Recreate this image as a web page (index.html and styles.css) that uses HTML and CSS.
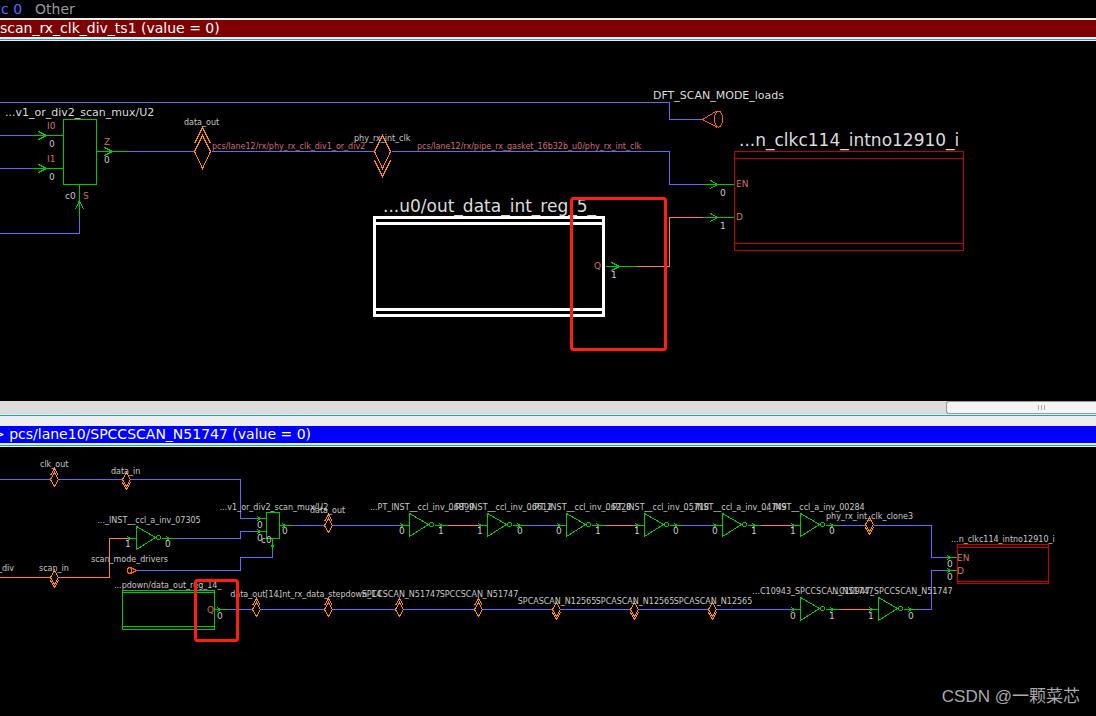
FILE: index.html
```html
<!DOCTYPE html>
<html lang="en">
<head>
	<meta charset="UTF-8">
	<title>Schematic viewer</title>
	<link rel="stylesheet" href="styles.css">
</head>
<body>
	<div class="viewer">
		<div class="legend">
			<span class="const">c 0</span>
			<span class="other">Other</span>
		</div>
		<div class="pane-title red">scan_rx_clk_div_ts1 (value = 0)</div>
		<svg class="canvas top">
			<g class="shapes" transform="translate(.5 .5)">
				<!-- nets -->
				<path class="net" d="M-1 61H669V78H702M-1 94H31M-1 127H31M-1 192H79V176M128 110H194M211 110H374M391 110H669V143H702"/>
				<path class="net one" d="M636 225H669V176H702"/>
				<!-- mux -->
				<path class="cell" d="M63 78H96V143H63ZM31 94H63M38 90L46 94L38 98M31 127H63M38 123L46 127L38 131M96 110H128M104 106L112 110L104 114M79 143V176M75 168L79 159L83 168"/>
				<!-- pins -->
				<path class="cell" d="M605 225H636M611 221L619 225L611 229M702 143H734M710 139L717 143L710 147M702 176H734M710 172L717 176L710 180"/>
				<path class="port" d="M202 94L210 110L202 127L194 110ZM194 102L202 86L210 102"/>
				<path class="port" d="M382 94L390 110L382 127L374 110ZM374 119L382 135L390 119"/>
				<path class="load" d="M717 69L702 78L717 86"/>
				<ellipse class="load" cx="718" cy="77.5" rx="4" ry="8"/>
				<path class="latch" d="M734 110H963V209H734ZM734 117H963M734 202H963"/>
				<path class="selected" d="M374 176H603V274H374ZM374 182H603M374 268H603"/>
			</g>
			<g class="labels">
				<text class="mid" x="5" y="75">...v1_or_div2_scan_mux/U2</text>
				<text x="184" y="84">data_out</text>
				<text class="path" x="212" y="108">pcs/lane12/rx/phy_rx_clk_div1_or_div2</text>
				<text x="354" y="100">phy_rx_int_clk</text>
				<text class="path" x="417" y="108">pcs/lane12/rx/pipe_rx_gasket_16b32b_u0/phy_rx_int_clk</text>
				<text class="mid" x="653" y="58">DFT_SCAN_MODE_loads</text>
				<text class="big" x="739" y="105">...n_clkc114_intno12910_i</text>
				<text class="big" x="383" y="171">...u0/out_data_int_reg_5_</text>
			</g>
			<g class="labels values">
				<text class="pin" x="47" y="88">I0</text>
				<text x="49" y="106">0</text>
				<text class="pin" x="47" y="121">I1</text>
				<text x="49" y="139">0</text>
				<text class="pin" x="104" y="104">Z</text>
				<text x="104" y="122">0</text>
				<text x="65" y="158">c0</text>
				<text class="pin" x="83" y="158">S</text>
				<text class="pin" x="736" y="146">EN</text>
				<text x="720" y="155">0</text>
				<text class="pin" x="736" y="179">D</text>
				<text x="720" y="188">1</text>
				<text class="pin" x="594" y="228">Q</text>
				<text x="611" y="237">1</text>
			</g>
			<rect class="mark" x="571.5" y="157.5" width="94" height="151" rx="2"/>
		</svg>
		<div class="scrollbar"><div class="thumb"><i></i><i></i><i></i></div></div>
		<div class="splitter"></div>
		<div class="pane-title blue"><span>&gt; pcs/lane10/SPCCSCAN_N51747 (value = 0)</span></div>
		<svg class="canvas bottom">
			<defs>
				<path id="up" d="M0 -6L4 1L0 8L-4 1ZM-4 -3L0 -10L4 -3"/>
				<path id="down" d="M0 -7L4 0L0 7L-4 0ZM-4 3L0 10L4 3"/>
				<g id="inv">
					<path d="M0 -12V11L19 -1ZM-9 0H0M-9 -2L-6 0L-9 2M25 0H38M30 -2L33 0L30 2"/>
					<circle cx="22" cy="-1" r="2"/>
				</g>
			</defs>
			<g class="shapes" transform="translate(.5 .5)">
				<path class="net" d="M-1 32H50M58 32H122M130 32H240V71H256M174 91H240V84H256M136 123H240V110H272V103M292 78H324M332 78H400M525 78H557M682 78H713M838 78H865M873 78H931V110H945M227 162H252M260 162H324M332 162H395M403 162H474M482 162H552M560 162H630M638 162H708M716 162H791M916 162H931V123H945"/>
				<path class="net one" d="M-1 130H50M58 130H109V91H127M447 78H478M604 78H635M760 78H791M838 162H869"/>
				<path class="cell" d="M266 65H279V91H266ZM256 71H266M257 69L260 71L257 73M256 84H266M257 82L260 84L257 86M279 78H292M282 76L285 78L282 80M272 91V103M270 100L272 97L274 100"/>
				<path class="cell" d="M122 143H214V182H122ZM122 145H214M122 179H214M214 162H227M217 160L220 162L217 164"/>
				<path class="cell" d="M945 110H957M947 108L950 110L947 112M945 123H957M947 121L950 123L947 125"/>
				<path class="latch" d="M957 97H1048V136H957ZM957 100H1048M957 134H1048"/>
				<g class="cell">
					<use href="#inv" x="136" y="91"/>
					<use href="#inv" x="409" y="78"/>
					<use href="#inv" x="487" y="78"/>
					<use href="#inv" x="566" y="78"/>
					<use href="#inv" x="644" y="78"/>
					<use href="#inv" x="722" y="78"/>
					<use href="#inv" x="800" y="78"/>
					<use href="#inv" x="800" y="162"/>
					<use href="#inv" x="878" y="162"/>
				</g>
				<g class="port">
					<use href="#up" x="54" y="31"/>
					<use href="#down" x="126" y="32"/>
					<use href="#down" x="54" y="130"/>
					<use href="#up" x="328" y="77"/>
					<use href="#down" x="869" y="77"/>
					<use href="#up" x="256" y="161"/>
					<use href="#up" x="328" y="161"/>
					<use href="#up" x="399" y="161"/>
					<use href="#up" x="478" y="161"/>
					<use href="#down" x="556" y="162"/>
					<use href="#down" x="634" y="162"/>
					<use href="#down" x="712" y="162"/>
				</g>
				<path class="load" d="M130 120L136 123L130 126"/>
				<ellipse class="load" cx="129" cy="123" rx="2" ry="3"/>
			</g>
			<g class="labels">
				<text x="40" y="20">clk_out</text>
				<text x="111" y="27">data_in</text>
				<text x="-2" y="124">_div</text>
				<text x="39" y="124">scan_in</text>
				<text x="91" y="115">scan_mode_drivers</text>
				<text x="114" y="141">...pdown/data_out_reg_14_</text>
				<text x="310" y="66">data_out</text>
				<text x="826" y="72">phy_rx_int_clk_clone3</text>
				<text x="951" y="95">...n_clkc114_intno12910_i</text>
			</g>
			<g class="labels centered">
				<text x="149" y="76">..._INST__ccl_a_inv_07305</text>
				<text x="274" y="63">...v1_or_div2_scan_mux/U2</text>
				<text x="422" y="63">...PT_INST__ccl_inv_06899</text>
				<text x="500" y="63">...PT_INST__ccl_inv_06612</text>
				<text x="579" y="63">...PT_INST__ccl_inv_06228</text>
				<text x="657" y="63">...PT_INST__ccl_inv_05718</text>
				<text x="735" y="63">..._INST__ccl_a_inv_04749</text>
				<text x="813" y="63">..._INST__ccl_a_inv_00284</text>
				<text x="256" y="150">data_out[14]</text>
				<text x="328" y="150">...nt_rx_data_stepdown_14</text>
				<text x="401" y="150">SPCCSCAN_N51747</text>
				<text x="479" y="150">SPCCSCAN_N51747</text>
				<text x="557" y="157">SPCASCAN_N12565</text>
				<text x="635" y="157">SPCASCAN_N12565</text>
				<text x="713" y="157">SPCASCAN_N12565</text>
				<text x="813" y="147">...C10943_SPCCSCAN_N51747</text>
				<text x="892" y="147">...C10947_SPCCSCAN_N51747</text>
			</g>
			<!-- pins and simulated values -->
			<g class="labels values">
				<text class="pin" x="207" y="166">Q</text>
				<text class="pin" x="957" y="114">EN</text>
				<text class="pin" x="957" y="127">D</text>
				<text x="125" y="100">1</text>
				<text x="165" y="100">0</text>
				<text x="257" y="81">0</text>
				<text x="257" y="94">0</text>
				<text x="261" y="96">c0</text>
				<text x="282" y="87">0</text>
				<text x="399" y="87">0</text>
				<text x="438" y="87">1</text>
				<text x="477" y="87">1</text>
				<text x="517" y="87">0</text>
				<text x="556" y="87">0</text>
				<text x="595" y="87">1</text>
				<text x="634" y="87">1</text>
				<text x="673" y="87">0</text>
				<text x="712" y="87">0</text>
				<text x="751" y="87">1</text>
				<text x="790" y="87">1</text>
				<text x="829" y="87">0</text>
				<text x="947" y="120">0</text>
				<text x="947" y="133">0</text>
				<text x="217" y="172">0</text>
				<text x="790" y="172">0</text>
				<text x="829" y="172">1</text>
				<text x="868" y="172">1</text>
				<text x="908" y="172">0</text>
			</g>
			<rect class="mark" x="195.5" y="133.5" width="42" height="60" rx="2"/>
		</svg>
		<div class="watermark">CSDN @一颗菜芯</div>
	</div>
</body>
</html>
```
FILE: styles.css
```css
html, body {
	margin: 0;
	padding: 0;
	background: #000;
	font-family: "DejaVu Sans", sans-serif;
	font-size: 14px;
}
.viewer {
	position: relative;
	display: flex;
	flex-direction: column;
	min-height: 100vh;
	overflow: hidden;
}
.legend {
	display: flex;
	gap: 13px;
	height: 18px;
	padding-left: 1px;
	line-height: 18px;
}
.const {
	color: #6464ff;
}
.other {
	color: #999;
}
.pane-title {
	position: relative;
	height: 17px;
	border-top: 2px solid #eee;
	border-bottom: 4px solid #eee;
	line-height: 17px;
	color: #fff;
	white-space: nowrap;
}
.pane-title:after {
	content: "";
	position: absolute;
	left: 0;
	right: 0;
	bottom: -3px;
	height: 1px;
	background: #00a8ff;
}
.red {
	background: #800000;
}
.blue {
	border-top: 0;
	background: #00f;
}
.blue span {
	margin-left: -7px;
}
.canvas {
	display: block;
	width: 100%;
}
.top {
	height: 360px;
}
.bottom {
	flex: 1;
	min-height: 269px;
}
.shapes {
	fill: none;
	stroke-width: 1;
	shape-rendering: crispEdges;
}
.net {
	stroke: #6464ff;
}
.one {
	stroke: #ff7f40;
}
.cell {
	stroke: #00c800;
}
.port {
	stroke: #ff8c00;
}
.load {
	stroke: #ff6400;
}
.latch {
	stroke: #c80000;
}
.selected {
	stroke: #fff;
	stroke-width: 3;
}
.mark {
	fill: none;
	stroke: #ff1e10;
	stroke-width: 3;
}
.labels {
	font-size: 8px;
	fill: #c8c8c8;
}
.values {
	font-size: 9px;
}
.centered {
	text-anchor: middle;
}
.pin, .path {
	fill: #d26e6e;
}
.mid {
	font-size: 11px;
	fill: #dcdcdc;
}
.big {
	font-size: 17px;
	fill: #dcdcdc;
}
.scrollbar {
	display: flex;
	justify-content: flex-end;
	height: 13px;
	background: #dcdcdc;
}
.thumb {
	display: flex;
	justify-content: center;
	align-items: center;
	gap: 2px;
	box-sizing: border-box;
	width: 150px;
	padding-left: 40px;
	border: 1px solid #999;
	border-right: 0;
	border-radius: 3px 0 0 3px;
	background: #f4f4f4;
}
.thumb i {
	width: 1px;
	height: 5px;
	background: #aaa;
}
.splitter {
	height: 10px;
	border-top: 1px solid #00a8ff;
	background: #eee;
	box-shadow: 0 -1px #eee;
	margin-top: 1px;
}
.watermark {
	position: absolute;
	right: 16px;
	bottom: 6px;
	font-family: "Liberation Sans", "Noto Sans CJK SC", sans-serif;
	font-size: 17px;
	line-height: 26px;
	color: #aaa;
}
```
